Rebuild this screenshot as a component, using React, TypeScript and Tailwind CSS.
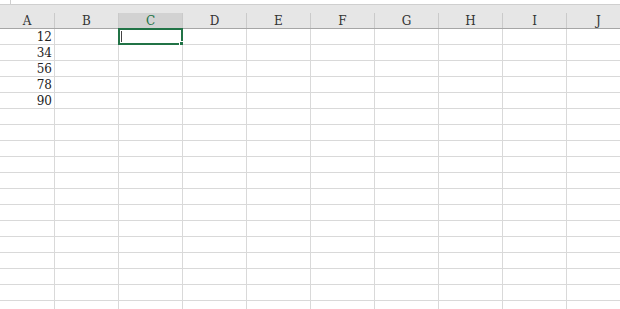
const cols = [
  { key: "A", w: "w-[55px]" },
  { key: "B", w: "w-[64px]" },
  { key: "C", w: "w-[64px]" },
  { key: "D", w: "w-[64px]" },
  { key: "E", w: "w-[64px]" },
  { key: "F", w: "w-[64px]" },
  { key: "G", w: "w-[64px]" },
  { key: "H", w: "w-[64px]" },
  { key: "I", w: "w-[64px]" },
  { key: "J", w: "w-[64px]" },
];

const values: Record<number, string> = { 0: "12", 1: "34", 2: "56", 3: "78", 4: "90" };

export default function App() {
  const rows = Array.from({ length: 18 }, (_, i) => i);
  return (
    <div
      className="h-[309px] w-[620px] overflow-hidden bg-white text-[12px] text-[#222]"
      style={{ fontFamily: '"DejaVu Serif", "Liberation Serif", serif' }}
    >
      {/* formula bar edge */}
      <div className="flex h-[5px] border-b border-[#cfcfcf]">
        <div className="w-[11px] border-r border-[#cfcfcf]" />
      </div>

      {/* column headers */}
      <div className="bg-[#e6e6e6] pt-[8px]">
        <div className="flex h-[16px] border-b border-[#a6a6a6]">
          {cols.map((c) => (
            <div
              key={c.key}
              className={`${c.w} shrink-0 border-r border-[#cacaca] pt-[1px] text-center leading-[15px] ${
                c.key === "C" ? "bg-[#d2d2d2] text-[#217346]" : "text-[#333]"
              }`}
            >
              {c.key}
            </div>
          ))}
        </div>
      </div>

      {/* grid body */}
      <div className="flex flex-col">
        {rows.map((r) => (
          <div key={r} className="flex h-[16px]">
            {cols.map((c) => (
              <div
                key={c.key}
                className={`${c.w} relative shrink-0 border-r border-b border-[#d9d9d9] pr-[2px] pt-[1px] text-right leading-[15px]`}
              >
                {c.key === "A" ? values[r] ?? "" : ""}
                {c.key === "C" && r === 0 && (
                  <div className="absolute -left-[1px] -top-[1px] h-[17px] w-[65px] border-2 border-[#217346]">
                    <div className="absolute left-[1px] top-[1px] h-[11px] w-[1px] bg-[#444]" />
                    <div className="absolute -bottom-[3px] -right-[3px] h-[5px] w-[5px] border border-white bg-[#217346]" />
                  </div>
                )}
              </div>
            ))}
          </div>
        ))}
      </div>
    </div>
  );
}
